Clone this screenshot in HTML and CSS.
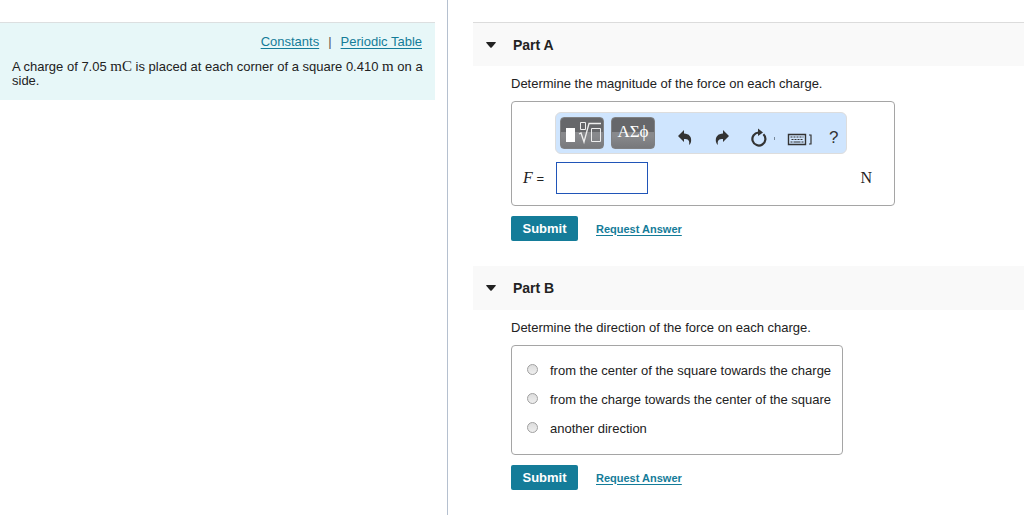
FILE: index.html
```html
<!DOCTYPE html>
<html lang="en">
<head>
<meta charset="utf-8">
<title>Force on corner charges</title>
<link rel="stylesheet" href="styles.css">
</head>
<body>
<div class="layout">
  <aside class="problem-pane">
    <section class="problem">
      <nav class="resources"><a href="#constants">Constants</a><span class="divider">|</span><a href="#table">Periodic Table</a></nav>
      <p class="statement">A charge of 7.05 <span class="unit">mC</span> is placed at each corner of a square 0.410 <span class="unit">m</span> on a side.</p>
    </section>
  </aside>
  <main class="parts">
    <section class="part">
      <header class="part-header part-header-first">
        <svg class="caret" viewBox="0 0 10 6" aria-hidden="true"><path d="M0 0.5Q0 0 1 0H9Q10 0 10 0.5L5.7 5.4Q5 6 4.3 5.4Z"/></svg>
        <h2>Part A</h2>
      </header>
      <div class="part-body">
        <p class="question">Determine the magnitude of the force on each charge.</p>
        <form class="answer-form">
          <div class="answer-box equation-box">
            <div class="toolbar">
              <button type="button" class="tool-key" aria-label="Templates">
                <svg width="44" height="32" viewBox="0 0 44 32"><path d="M6 11h9v14H6z" fill="#fff"/><g fill="none" stroke="#eee"><path d="M20.5 5.500h5v7h-5z"/><path d="M19 17l2-1 3 9 5-18.500h12" stroke-width="1.300"/><path d="M31.500 11.500h9v13h-9z"/></g></svg>
              </button>
              <button type="button" class="tool-key greek">ΑΣϕ</button>
              <button type="button" class="tool undo" aria-label="Undo">
                <svg width="14" height="16" viewBox="0 0 14 16"><path d="M0 6L6 0V3.500C11 3.500 14 7 13 12Q12.500 14 11 15C12 10 10 9 6 9V12Z"/></svg>
              </button>
              <button type="button" class="tool redo" aria-label="Redo">
                <svg width="14" height="16" viewBox="0 0 14 16"><path d="M14 6L8 0V3.500C3 3.500 0 7 1 12Q1.500 14 3 15C2 10 4 9 8 9V12Z"/></svg>
              </button>
              <button type="button" class="tool reset" aria-label="Reset">
                <svg width="26" height="20" viewBox="0 0 26 20"><path d="M13.400 6.300A6.500 6.500 0 1 1 8.500 4.500" fill="none" stroke="#333" stroke-width="2.200"/><path d="M8 0.500L13 4.500L8 8Z"/><path d="M24 9h1v3h-1z" fill="#789"/></svg>
              </button>
              <button type="button" class="tool keyboard" aria-label="Keyboard shortcuts">
                <svg width="26" height="14" viewBox="0 0 26 14"><g fill="none" stroke="#333"><path d="M1.500 1.500h17v10h-17z" stroke-width="1.400"/><path d="M3.500 4h13M4.500 6.500h11" stroke-dasharray="2 1"/><path d="M3.500 9h2M6.500 9h7M14.500 9h2M22 2h2v9h-2" stroke-width="1.200"/></g></svg>
              </button>
              <button type="button" class="tool help" aria-label="Help">?</button>
            </div>
            <div class="equation">
              <label for="force"><i>F</i> =</label>
              <input id="force" class="force-input" type="text">
              <span class="newton">N</span>
            </div>
          </div>
          <div class="actions"><button type="button" class="submit">Submit</button><a href="#answer-a">Request Answer</a></div>
        </form>
      </div>
    </section>
    <section class="part">
      <header class="part-header">
        <svg class="caret" viewBox="0 0 10 6" aria-hidden="true"><path d="M0 0.500Q0 0 1 0H9Q10 0 10 0.500L5.700 5.400Q5 6 4.300 5.400Z"/></svg>
        <h2>Part B</h2>
      </header>
      <div class="part-body">
        <p class="question">Determine the direction of the force on each charge.</p>
        <form class="answer-form">
          <div class="answer-box choices">
            <label><input type="radio" name="direction"><span>from the center of the square towards the charge</span></label>
            <label><input type="radio" name="direction"><span>from the charge towards the center of the square</span></label>
            <label><input type="radio" name="direction"><span>another direction</span></label>
          </div>
          <div class="actions"><button type="button" class="submit">Submit</button><a href="#answer-b">Request Answer</a></div>
        </form>
      </div>
    </section>
  </main>
</div>
</body>
</html>
```
FILE: styles.css
```css
* { box-sizing: border-box; }
body {
  margin: 0;
  background: #fff;
  color: #222;
  font: 13px/14px "Liberation Sans", Arial, sans-serif;
}
h2, p { margin: 0; }
a { color: #147c99; text-underline-offset: 2px; }
button { font-family: inherit; border: 0; padding: 0; }
.layout {
  display: grid;
  grid-template-columns: 7fr 9fr;
  min-height: 100vh;
}
.problem-pane {
  border-right: 1px solid #b5c0cf;
  padding: 22px 12px 0 0;
}
.problem {
  background: #e7f7f8;
  border-top: 1px solid #dcdfe0;
  padding: 12px 8px 12px 12px;
}
.resources {
  display: flex;
  justify-content: flex-end;
  margin-bottom: 10px;
  padding-right: 5px;
}
.divider { margin: 0 9px; color: #555; }
.unit, .newton, .equation i { font-family: "Liberation Serif", "Times New Roman", serif; }
.unit { font-size: 15px; line-height: 14px; }
.parts { padding: 22px 0 0 25px; }
.part { margin-bottom: 25px; }
.part-header {
  display: flex;
  align-items: center;
  gap: 17px;
  height: 44px;
  padding: 0 13px;
  background: #f9f9f9;
}
.part-header-first { border-top: 1px solid #dcdcdc; }
.caret { width: 10px; height: 6px; fill: #222; }
h2 { font-size: 14px; line-height: 16px; }
.part-body { padding: 11px 0 0 38px; }
.question { margin-bottom: 10px; }
.answer-box {
  width: fit-content;
  max-width: 100%;
  border: 1px solid #a5a5a5;
  border-radius: 4px;
}
.equation-box { padding: 10px 47px 11px 11px; }
.toolbar {
  display: flex;
  align-items: center;
  width: 292px;
  height: 42px;
  margin-left: 32px;
  padding-left: 4px;
  background: #cfe5fe;
  border: 1px solid #ddd;
  border-radius: 6px;
}
.tool-key {
  width: 44px;
  height: 32px;
  margin-right: 7px;
  border: 1px solid #808183;
  border-radius: 4px;
  background: linear-gradient(#66676a 0 45%, #88898c 45% 60%, #77787b);
  color: #fff;
}
.tool-key svg { display: block; margin: -1px; }
.greek {
  font: 17px/20px "Liberation Serif", "Times New Roman", serif;
  padding-bottom: 3px;
}
.tool {
  display: flex;
  background: none;
  color: #333;
  fill: #333;
  margin-top: 10px;
}
.undo { margin-left: 16px; }
.redo { margin-left: 23px; }
.reset { margin-left: 21px; }
.keyboard { margin-top: 14px; margin-left: 11px; }
.help { margin-left: 16px; font-size: 17px; line-height: 20px; }
.equation {
  display: flex;
  align-items: center;
  margin-top: 8px;
}
.equation label { width: 33px; }
.equation i { font-size: 16px; }
.force-input {
  width: 92px;
  height: 32px;
  border: 1px solid #2055b8;
  background: #fff;
}
.newton { margin-left: auto; margin-right: -25px; font-size: 16px; }
.actions {
  display: flex;
  align-items: center;
  gap: 18px;
  margin-top: 10px;
}
.actions a { font-size: 11px; font-weight: bold; }
.submit {
  width: 67px;
  height: 25px;
  border-radius: 2px;
  background: #147c99;
  color: #fff;
  font-size: 13px;
  font-weight: bold;
}
.choices {
  display: grid;
  gap: 15px;
  padding: 18px 11px 18px 15px;
}
.choices label { display: flex; align-items: flex-start; gap: 12px; }
.choices input {
  appearance: none;
  width: 11px;
  height: 11px;
  margin: 0;
  border: 1px solid #a0a0a0;
  border-radius: 50%;
  background: linear-gradient(#ddd, #eee);
}
.choices input:checked { background: radial-gradient(#333 35%, #eee 40%); }
```
